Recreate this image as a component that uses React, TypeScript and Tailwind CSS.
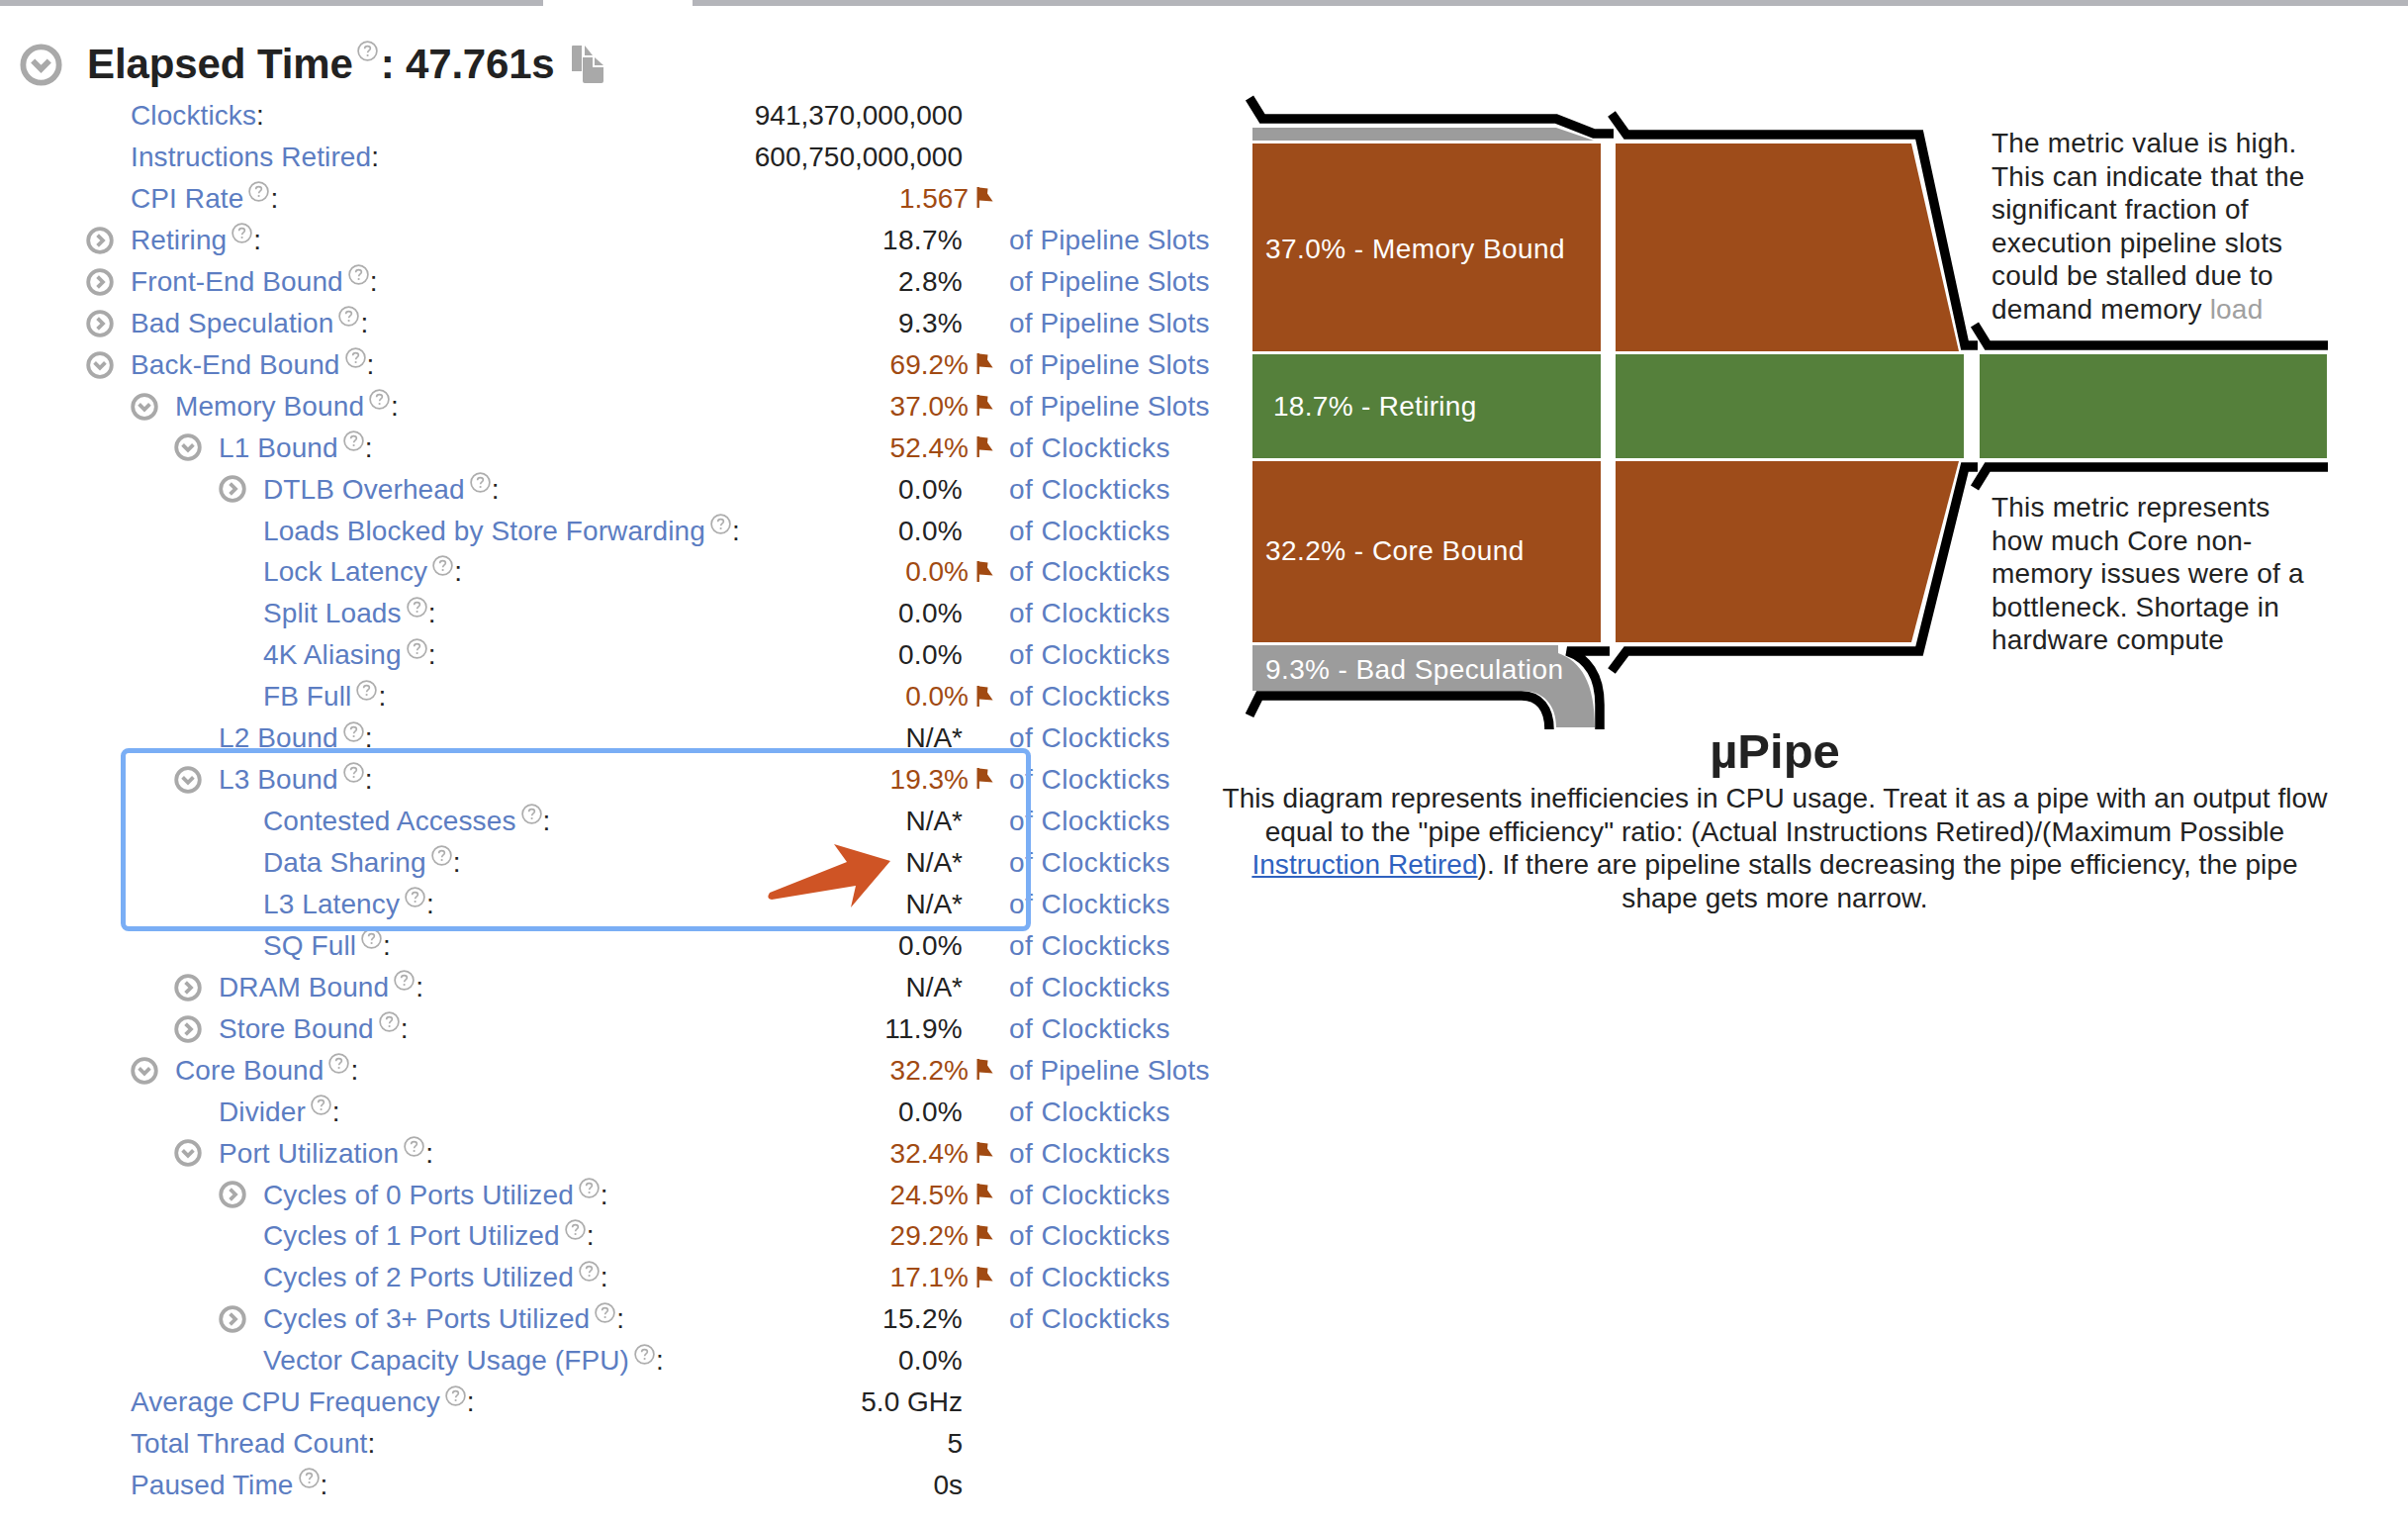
import React from 'react';

type Row = {
  label: string;
  level: number;
  value: string;
  unit?: string;
  flag?: boolean;
  help?: boolean;
  toggle?: 'open' | 'closed';
};

const PS = 'of Pipeline Slots';
const CT = 'of Clockticks';

const rows: Row[] = [
  { label: 'Clockticks', level: 0, value: '941,370,000,000' },
  { label: 'Instructions Retired', level: 0, value: '600,750,000,000' },
  { label: 'CPI Rate', level: 0, value: '1.567', flag: true, help: true },
  { label: 'Retiring', level: 0, value: '18.7%', unit: PS, help: true, toggle: 'closed' },
  { label: 'Front-End Bound', level: 0, value: '2.8%', unit: PS, help: true, toggle: 'closed' },
  { label: 'Bad Speculation', level: 0, value: '9.3%', unit: PS, help: true, toggle: 'closed' },
  { label: 'Back-End Bound', level: 0, value: '69.2%', unit: PS, flag: true, help: true, toggle: 'open' },
  { label: 'Memory Bound', level: 1, value: '37.0%', unit: PS, flag: true, help: true, toggle: 'open' },
  { label: 'L1 Bound', level: 2, value: '52.4%', unit: CT, flag: true, help: true, toggle: 'open' },
  { label: 'DTLB Overhead', level: 3, value: '0.0%', unit: CT, help: true, toggle: 'closed' },
  { label: 'Loads Blocked by Store Forwarding', level: 3, value: '0.0%', unit: CT, help: true },
  { label: 'Lock Latency', level: 3, value: '0.0%', unit: CT, flag: true, help: true },
  { label: 'Split Loads', level: 3, value: '0.0%', unit: CT, help: true },
  { label: '4K Aliasing', level: 3, value: '0.0%', unit: CT, help: true },
  { label: 'FB Full', level: 3, value: '0.0%', unit: CT, flag: true, help: true },
  { label: 'L2 Bound', level: 2, value: 'N/A*', unit: CT, help: true },
  { label: 'L3 Bound', level: 2, value: '19.3%', unit: CT, flag: true, help: true, toggle: 'open' },
  { label: 'Contested Accesses', level: 3, value: 'N/A*', unit: CT, help: true },
  { label: 'Data Sharing', level: 3, value: 'N/A*', unit: CT, help: true },
  { label: 'L3 Latency', level: 3, value: 'N/A*', unit: CT, help: true },
  { label: 'SQ Full', level: 3, value: '0.0%', unit: CT, help: true },
  { label: 'DRAM Bound', level: 2, value: 'N/A*', unit: CT, help: true, toggle: 'closed' },
  { label: 'Store Bound', level: 2, value: '11.9%', unit: CT, help: true, toggle: 'closed' },
  { label: 'Core Bound', level: 1, value: '32.2%', unit: PS, flag: true, help: true, toggle: 'open' },
  { label: 'Divider', level: 2, value: '0.0%', unit: CT, help: true },
  { label: 'Port Utilization', level: 2, value: '32.4%', unit: CT, flag: true, help: true, toggle: 'open' },
  { label: 'Cycles of 0 Ports Utilized', level: 3, value: '24.5%', unit: CT, flag: true, help: true, toggle: 'closed' },
  { label: 'Cycles of 1 Port Utilized', level: 3, value: '29.2%', unit: CT, flag: true, help: true },
  { label: 'Cycles of 2 Ports Utilized', level: 3, value: '17.1%', unit: CT, flag: true, help: true },
  { label: 'Cycles of 3+ Ports Utilized', level: 3, value: '15.2%', unit: CT, help: true, toggle: 'closed' },
  { label: 'Vector Capacity Usage (FPU)', level: 3, value: '0.0%', help: true },
  { label: 'Average CPU Frequency', level: 0, value: '5.0 GHz', help: true },
  { label: 'Total Thread Count', level: 0, value: '5' },
  { label: 'Paused Time', level: 0, value: '0s', help: true },
];

const indent = ['pl-[87px]', 'pl-[132px]', 'pl-[176px]', 'pl-[221px]'];

const Toggle = ({ open, size = 28 }: { open: boolean; size?: number }) => (
  <svg width={size} height={size} viewBox="0 0 28 28" className="shrink-0">
    <circle cx="14" cy="14" r="11.8" fill="none" stroke="#a9a9a9" strokeWidth="3.8" />
    <path
      d={open ? 'M8.6 11.4 L14 16.8 L19.4 11.4' : 'M11.6 8.6 L17 14 L11.6 19.4'}
      fill="none"
      stroke="#a9a9a9"
      strokeWidth="3.8"
    />
  </svg>
);

const HelpGlyph = () => (
  <>
    <circle cx="10.5" cy="10.5" r="9.4" fill="none" stroke="#adadad" strokeWidth="1.7" />
    <path
      d="M7.6 8.2 C7.6 6.4 9 5.6 10.5 5.6 C12.2 5.6 13.4 6.6 13.4 8 C13.4 9.8 10.6 10 10.6 12.2"
      fill="none"
      stroke="#adadad"
      strokeWidth="1.6"
    />
    <circle cx="10.6" cy="15" r="1.1" fill="#adadad" />
  </>
);

const Help = () => (
  <svg width="21" height="21" viewBox="0 0 21 21" className="ml-[5px] mr-[1px] -translate-y-[7px] shrink-0">
    <HelpGlyph />
  </svg>
);

const Flag = () => (
  <svg width="17" height="21" viewBox="0 0 17 21" className="-translate-y-[1px] shrink-0">
    <path d="M0.5 0 H2.9 V21 H0.5 Z M2.9 0.6 L11.5 1.4 L11 6.4 L16.6 14.4 L2.9 13.4 Z" fill="#a14a12" />
  </svg>
);

const Copy = () => (
  <svg width="33" height="38" viewBox="0 0 33 38" className="shrink-0">
    <path d="M0 1 Q0 0 1 0 H10 V26 H0 Z" fill="#a9a9a9" />
    <path d="M13 0 L21 10 H13 Z" fill="#a9a9a9" />
    <path d="M11 12 H21 V22 H32 V36 Q32 38 30 38 H13 Q11 38 11 36 Z" fill="#a9a9a9" />
    <path d="M23 12 L32 20 H23 Z" fill="#a9a9a9" />
  </svg>
);

const MetricRow = ({ row }: { row: Row }) => (
  <div className="flex h-[41.94px] items-center text-[#222]">
    <div className={`flex w-[880px] shrink-0 items-center ${indent[row.level]}`}>
      <span className="flex w-[45px] shrink-0 items-center">
        {row.toggle && <Toggle open={row.toggle === 'open'} />}
      </span>
      <span className="whitespace-nowrap tracking-[0.1px] text-[#5c7dc2]">{row.label}</span>
      {row.help && <Help />}
      <span>:</span>
    </div>
    <div className="flex w-[124px] shrink-0 items-center justify-end">
      {row.flag ? (
        <span className="flex items-center gap-[8px] text-[#a14a12]">
          {row.value}
          <Flag />
        </span>
      ) : (
        <span className={`whitespace-nowrap pr-[31px] ${row.value.endsWith('%') ? 'tracking-[0.3px]' : ''}`}>{row.value}</span>
      )}
    </div>
    {row.unit && (
      <span className={`ml-[16px] whitespace-nowrap text-[#5c7dc2] ${row.unit === CT ? 'tracking-[0.45px]' : 'tracking-[0.1px]'}`}>
        {row.unit}
      </span>
    )}
  </div>
);

const PipeDiagram = () => (
  <svg width="1110" height="645" viewBox="1250 95 1110 645" className="block">
    <g fill="#9c9c9c">
      <path d="M1266 129 H1573 L1611 142 H1266 Z" />
      <path d="M1266 652 H1575 V660 C1598 668 1612 690 1612 735 H1573 C1573 712 1560 698 1538 698 H1266 Z" />
    </g>
    <g fill="#9e4c1a">
      <rect x="1266" y="145" width="352" height="210" />
      <path d="M1633 145 H1932 L1980 355 H1633 Z" />
      <rect x="1266" y="466" width="352" height="183" />
      <path d="M1633 466 H1980 L1932 649 H1633 Z" />
    </g>
    <g fill="#55803b">
      <rect x="1266" y="358" width="352" height="105" />
      <rect x="1633" y="358" width="352" height="105" />
      <rect x="2001" y="358" width="351" height="105" />
    </g>
    <g fill="none" stroke="#000" strokeWidth="9.5">
      <path d="M1263 99 L1276 120 H1573 L1611 135 H1631" />
      <path d="M1629 115 L1644 136 H1940 L1986 349 H1999" />
      <path d="M1996 328 L2009 349 H2353" />
      <path d="M1629 678 L1644 658 H1940 L1986 472 H1999" />
      <path d="M1996 493 L2009 472 H2353" />
      <path d="M1627 658 H1584 C1604 665 1617 682 1617 712 V737" />
      <path d="M1263 723 L1273 703 H1538 C1556 703 1566 716 1566 737" />
    </g>
  </svg>
);

export default function App() {
  return (
    <div className="relative h-[1542px] w-[2434px] overflow-hidden bg-white font-['Liberation_Sans',Arial,sans-serif] text-[28px] leading-[33.6px] text-[#222]">
      {/* page tabs rule */}
      <div className="flex h-[6px]">
        <div className="w-[549px] bg-[#b4b5ba]" />
        <div className="w-[151px]" />
        <div className="flex-1 bg-[#b4b5ba]" />
      </div>

      <div className="flex">
        {/* metrics */}
        <div className="relative w-[1250px] shrink-0">
          <div className="flex h-[90px] items-center pt-[28px]">
            <div className="flex w-[88px] justify-start pl-[20px]">
              <Toggle open size={43} />
            </div>
            <h1 className="whitespace-nowrap text-[42px] font-bold tracking-[-0.1px] text-[#222]">Elapsed Time</h1>
            <svg width="21" height="21" viewBox="0 0 21 21" className="ml-[4px] mr-[3px] -translate-y-[14px] shrink-0">
              <HelpGlyph />
            </svg>
            <span className="whitespace-nowrap text-[42px] font-bold tracking-[-0.2px]">: 47.761s</span>
            <span className="ml-[17px]">
              <Copy />
            </span>
          </div>
          <div>
            {rows.map((row) => (
              <MetricRow key={row.label} row={row} />
            ))}
          </div>

          {/* callout over the L3 rows */}
          <div className="absolute left-[122px] top-[750px] h-[185px] w-[920px] rounded-[8px] border-[5px] border-[#7aaef5]" />
          <svg width="130" height="70" viewBox="772 850 130 70" className="absolute left-[772px] top-[844px]">
            <path d="M900 870 L843 853 L856 871 L778 902 Q774 908 780 909 L865 895 L860 917 Z" fill="#cf5425" />
          </svg>
        </div>

        {/* diagram */}
        <div className="relative w-[1184px] shrink-0">
          <div className="relative mt-[89px]">
            <PipeDiagram />
            <span className="absolute left-[29px] top-[140px] whitespace-nowrap tracking-[0.45px] text-white">37.0% - Memory Bound</span>
            <span className="absolute left-[37px] top-[299px] whitespace-nowrap tracking-[0.3px] text-white">18.7% - Retiring</span>
            <span className="absolute left-[29px] top-[445px] whitespace-nowrap tracking-[0.45px] text-white">32.2% - Core Bound</span>
            <span className="absolute left-[29px] top-[565px] whitespace-nowrap tracking-[0.4px] text-white">9.3% - Bad Speculation</span>
            <p className="absolute left-[763px] top-[33px] w-[340px] tracking-[0.2px]">
              The metric value is high.<br />
              This can indicate that the<br />
              significant fraction of<br />
              execution pipeline slots<br />
              could be stalled due to<br />
              demand memory <span className="text-[#a0a0a0]">load</span>
            </p>
            <p className="absolute left-[763px] top-[401px] w-[340px] tracking-[0.2px]">
              This metric represents<br />
              how much Core non-<br />
              memory issues were of a<br />
              bottleneck. Shortage in<br />
              hardware compute
            </p>
          </div>
          <div className="-mt-[9px] w-[1120px] -translate-x-[16px] text-center">
            <h2 className="text-[49px] font-bold leading-[56px]">µPipe</h2>
            <p className="mt-[3px] whitespace-nowrap tracking-[0.05px]">
              This diagram represents inefficiencies in CPU usage. Treat it as a pipe with an output flow<br />
              equal to the "pipe efficiency" ratio: (Actual Instructions Retired)/(Maximum Possible<br />
              <a className="text-[#2f62c0] underline">Instruction Retired</a>). If there are pipeline stalls decreasing the pipe efficiency, the pipe<br />
              shape gets more narrow.
            </p>
          </div>
        </div>
      </div>
    </div>
  );
}
